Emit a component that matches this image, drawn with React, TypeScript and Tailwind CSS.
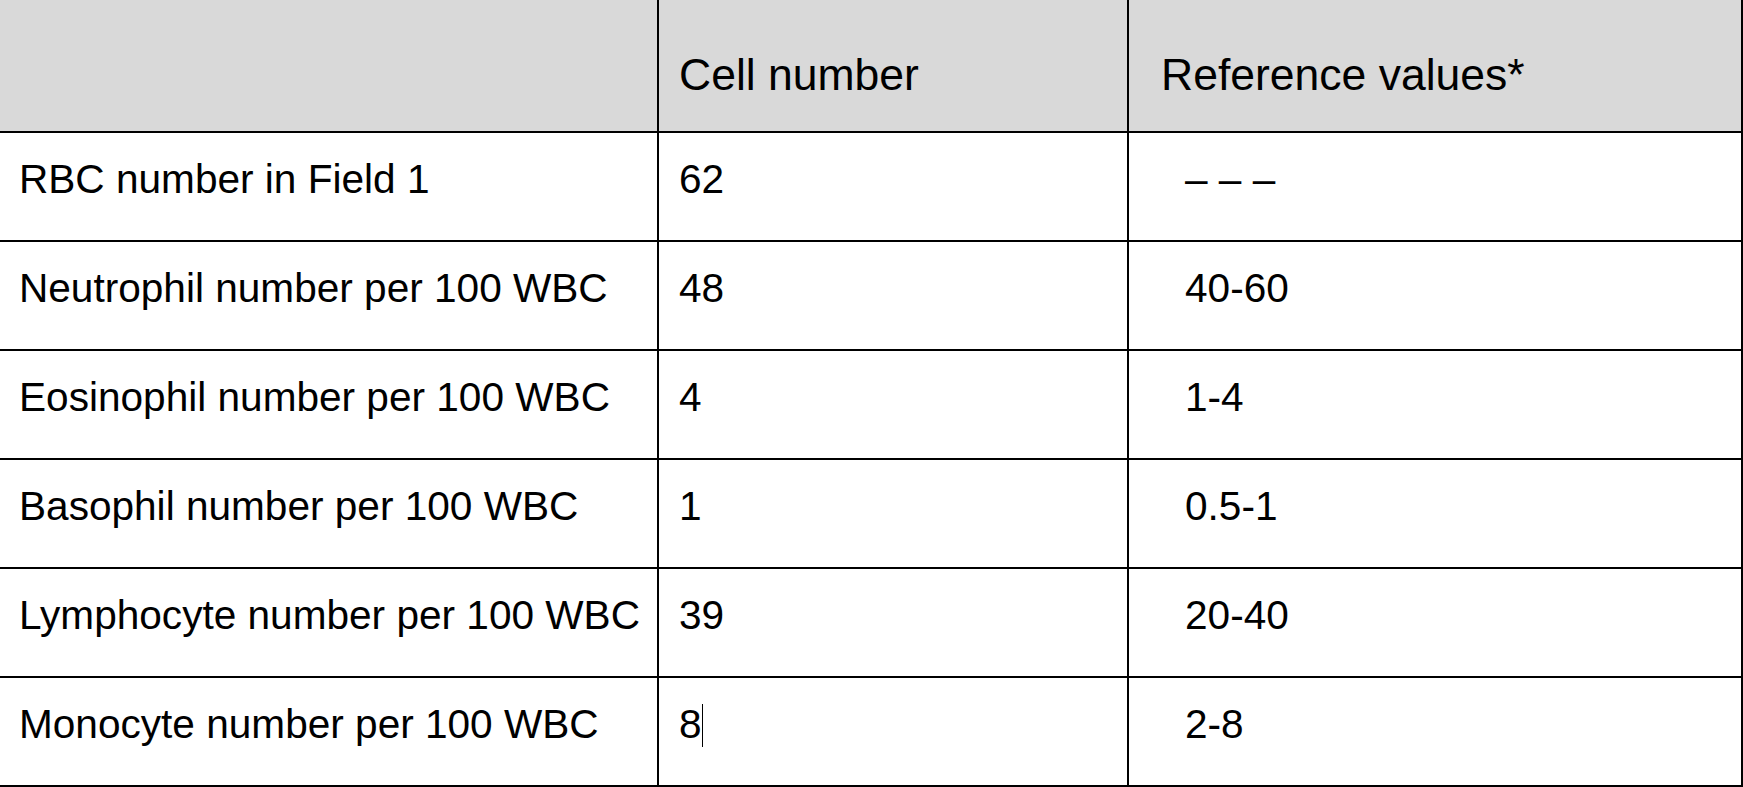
const rows = [
    { label: "RBC number in Field 1", count: "62", range: "– – –" },
    { label: "Neutrophil number per 100 WBC", count: "48", range: "40-60" },
    { label: "Eosinophil number per 100 WBC", count: "4", range: "1-4" },
    { label: "Basophil number per 100 WBC", count: "1", range: "0.5-1" },
    { label: "Lymphocyte number per 100 WBC", count: "39", range: "20-40" },
    { label: "Monocyte number per 100 WBC", count: "8", range: "2-8", caret: true },
];

export default function App() {
    return (
        <div className="w-[1743px] h-[787px] bg-white text-black text-[40.6px] leading-[46px] font-['Liberation_Sans',Arial,sans-serif] overflow-hidden">
            {/* Header */}
            <div className="flex h-[133px] bg-[#d9d9d9] border-b-2 border-black text-[44.5px] leading-[50px]">
                <div className="w-[659px] border-r-2 border-black" />
                <div className="w-[470px] border-r-2 border-black pl-[20px] pt-[50px]">Cell number</div>
                <div className="flex-1 border-r-2 border-black pl-[32px] pt-[50px]">Reference values*</div>
            </div>

            {rows.map(row => (
                <div key={row.label} className="flex h-[109px] border-b-2 border-black">
                    <div className="w-[659px] border-r-2 border-black pl-[19px] pt-[23px] whitespace-nowrap">{row.label}</div>
                    <div className="w-[470px] border-r-2 border-black pl-[20px] pt-[23px]">
                        {row.count}
                        {row.caret && <span className="inline-block w-px h-[43px] bg-black align-[-9px]" />}
                    </div>
                    <div className="flex-1 border-r-2 border-black pl-[56px] pt-[23px] whitespace-pre">{row.range}</div>
                </div>
            ))}
        </div>
    );
}
